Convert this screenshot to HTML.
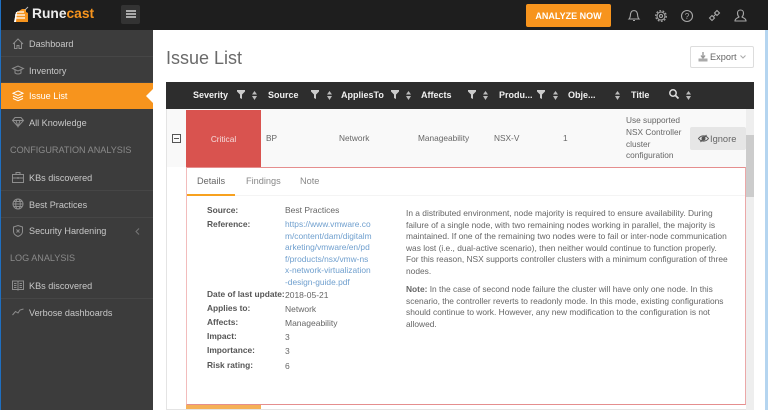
<!DOCTYPE html>
<html><head><meta charset="utf-8"><style>
*{box-sizing:border-box}
html,body{margin:0;padding:0;width:768px;height:410px;overflow:hidden;background:#fff;font-family:"Liberation Sans",sans-serif;color:#555}
body{filter:blur(.35px)}
.a{position:absolute;white-space:nowrap}
.nav{position:absolute;left:29px;font-size:9.1px;color:#c8c8c8;line-height:12px;white-space:nowrap}
.sec{position:absolute;left:10px;font-size:9.1px;color:#8a8a8a;line-height:12px;white-space:nowrap}
.sep{position:absolute;left:1px;width:152px;height:1px;background:#464646}
.th{position:absolute;top:89px;font-size:9px;font-weight:bold;color:#f0f0f0;line-height:12px;white-space:nowrap}
.td{position:absolute;font-size:8.3px;color:#666;line-height:12px;white-space:nowrap}
.l{position:absolute;left:207px;font-size:8.4px;font-weight:bold;color:#555;line-height:11px;white-space:nowrap}
.v{position:absolute;left:285px;font-size:8.5px;color:#666;line-height:11px;white-space:nowrap}
.lk{color:#6f9fce;font-size:8.4px}
.p{position:absolute;left:406px;font-size:8.4px;color:#666;line-height:11.6px;white-space:nowrap}
svg{position:absolute;overflow:visible}
.i{fill:none;stroke:#8d8d8d;stroke-width:1}
.t{fill:none;stroke:#a8a8a8;stroke-width:1.1}
</style></head><body>
<div class="a" style="left:0;top:0;width:768px;height:30px;background:#1e1e1e"></div>
<div class="a" style="left:0;top:30px;width:153px;height:380px;background:#3c3c3c"></div>
<div class="a" style="left:0;top:0;width:1px;height:410px;background:#1f6fc0"></div>
<div class="a" style="left:765px;top:30px;width:3px;height:380px;background:#b5d5f0"></div>

<svg style="left:13px;top:6px" width="16" height="17" viewBox="0 0 16 17"><path d="M1 16L3 7L9 3H13V6L15 7V16Z" fill="#f7941d"/><path d="M2 9H12M2 12H12M4 6H11" stroke="#fff" stroke-width="1.2"/><path d="M1 16L3 6L4 6L3 16Z" fill="#fff"/><path d="M12 4L15 1" stroke="#bbb"/></svg>
<div class="a" style="left:32px;top:6px;font-size:13.8px;font-weight:bold;line-height:16px;color:#eee">Rune<span style="color:#f7941d">cast</span></div>
<div class="a" style="left:121px;top:5px;width:19px;height:19px;background:#333;border-radius:2px"></div>
<div class="a" style="left:126px;top:10px;width:10px;height:2px;background:#aaa"></div>
<div class="a" style="left:126px;top:13px;width:10px;height:2px;background:#aaa"></div>
<div class="a" style="left:126px;top:16px;width:10px;height:2px;background:#aaa"></div>

<div class="a" style="left:526px;top:4px;width:85px;height:23px;background:#f7941d;border-radius:2px;color:#fff;font-size:9px;font-weight:bold;text-align:center;line-height:24px">ANALYZE NOW</div>
<svg class="t" style="left:628px;top:9px" width="12" height="13" viewBox="0 0 12 13"><path d="M1 10C3 8 2 5 3 3.500C4 1 8 1 9 3.500C10 5 9 8 11 10ZM5 11.500H7" class="t"/></svg>
<svg style="left:655px;top:10px" width="12" height="12" viewBox="0 0 12 12"><circle cx="6" cy="6" r="4" class="t"/><circle cx="6" cy="6" r="5.300" fill="none" stroke="#a8a8a8" stroke-width="1.200" stroke-dasharray="1.800 1.500"/><circle cx="6" cy="6" r="1.500" class="t"/></svg>
<svg style="left:681px;top:10px" width="13" height="13" viewBox="0 0 13 13"><circle cx="6" cy="6" r="5.500" class="t"/><text x="6" y="9" text-anchor="middle" font-family="Liberation Sans" font-size="8" fill="#a8a8a8">?</text></svg>
<svg style="left:708px;top:9px" width="13" height="13" viewBox="0 0 13 13"><path d="M1.500 9L4 6.500L6.500 9L4 11.500ZM6.500 4L9 1.500L11.500 4L9 6.500Z" class="t"/><path d="M5 8L8 5" class="t"/></svg>
<svg style="left:734px;top:9px" width="13" height="13" viewBox="0 0 13 13"><path d="M1 12C1 9 4 9 5 8C4 7 3.500 5.500 3.500 4C3.500 2 5 1 6.500 1S9.500 2 9.500 4C9.500 5.500 9 7 8 8C9 9 12 9 12 12Z" class="t"/></svg>

<div class="sep" style="top:56px"></div><div class="sep" style="top:82px"></div><div class="sep" style="top:108px;background:#3c3c3c"></div><div class="sep" style="top:190px"></div><div class="sep" style="top:217px"></div><div class="sep" style="top:298px"></div>
<div class="a" style="left:1px;top:83px;width:152px;height:26px;background:#f7941d"></div>
<div class="a" style="left:146px;top:89px;width:0;height:0;border-top:7px solid transparent;border-bottom:7px solid transparent;border-right:7px solid #fff"></div>

<svg class="i" style="left:12px;top:38px" width="12" height="11" viewBox="0 0 12 11"><path d="M1 6L6 1L11 6M2.500 5V10.500H5V7.500H7V10.500H9.500V5" class="i"/></svg>
<svg class="i" style="left:12px;top:65px" width="12" height="10" viewBox="0 0 12 10"><path d="M.5 3.500L6 1L11.500 3.500L6 6ZM3 5V8C4.500 9.300 7.500 9.300 9 8V5" class="i"/></svg>
<svg style="left:12px;top:90px" width="12" height="12" viewBox="0 0 12 12"><path d="M6 1L11 3.200L6 5.400L1 3.200ZM1 6L6 8.200L11 6M1 8.500L6 10.700L11 8.500" fill="none" stroke="#fff" stroke-width="1"/></svg>
<svg class="i" style="left:12px;top:117px" width="12" height="10" viewBox="0 0 12 10"><path d="M3 .5H9L11.500 3.500L6 9.500L.5 3.500ZM.5 3.500H11.500M4 3.500L6 9.500L8 3.500" class="i"/></svg>
<svg class="i" style="left:12px;top:172px" width="12" height="11" viewBox="0 0 12 11"><path d="M.5 2.500H11.500V10.500H.5ZM4 2.500V.5H8V2.500M.5 6H11.500M6 5V7" class="i"/></svg>
<svg style="left:12px;top:198px" width="12" height="12" viewBox="0 0 12 12"><circle cx="6" cy="6" r="5" class="i"/><ellipse cx="6" cy="6" rx="2.300" ry="5" class="i"/><path d="M1 6H11M1.700 3.500H10.300M1.700 8.500H10.300" class="i"/></svg>
<svg style="left:13px;top:225px" width="10" height="12" viewBox="0 0 10 12"><path d="M5 .5L9.500 2V6.500C9.500 9 7 10.700 5 11.500C3 10.700 .5 9 .5 6.500V2Z" class="i"/><path d="M3.500 4.500L6.500 7.500M6.500 4.500L3.500 7.500" class="i"/></svg>
<svg style="left:12px;top:280px" width="12" height="11" viewBox="0 0 12 11"><path d="M.5 1H5C5.500 1 6 1.500 6 2C6 1.500 6.500 1 7 1H11.500V9.500H7C6.500 9.500 6 10 6 10C6 10 5.500 9.500 5 9.500H.5ZM6 2V10M2 3.500H4.500M2 5.500H4.500M2 7.500H4.500M7.500 3.500H10M7.500 5.500H10M7.500 7.500H10" class="i"/></svg>
<svg style="left:12px;top:308px" width="12" height="8" viewBox="0 0 12 8"><path d="M.5 7L3.500 3.500L6 5L8 2L11.500 1" class="i"/></svg>

<div class="nav" style="top:38px">Dashboard</div>
<div class="nav" style="top:65px">Inventory</div>
<div class="nav" style="top:90px;color:#fff">Issue List</div>
<div class="nav" style="top:117px">All Knowledge</div>
<div class="sec" style="top:144px">CONFIGURATION ANALYSIS</div>
<div class="nav" style="top:172px">KBs discovered</div>
<div class="nav" style="top:199px">Best Practices</div>
<div class="nav" style="top:225px">Security Hardening</div>
<svg style="left:135px;top:228px" width="5" height="7" viewBox="0 0 5 7"><path d="M4 .5L1 3.500L4 6.500" fill="none" stroke="#777"/></svg>
<div class="sec" style="top:252px">LOG ANALYSIS</div>
<div class="nav" style="top:280px">KBs discovered</div>
<div class="nav" style="top:307px">Verbose dashboards</div>

<div class="a" style="left:166px;top:47px;font-size:18px;line-height:22px;color:#6a6a6a">Issue List</div>
<div class="a" style="left:690px;top:46px;width:64px;height:22px;border:1px solid #ddd;border-radius:2px;background:#fff"></div>
<svg style="left:698px;top:52px" width="10" height="10" viewBox="0 0 10 10"><path d="M5 0V5M3 3.500L5 6L7 3.500" fill="none" stroke="#999" stroke-width="1.400"/><path d="M.5 6.500H9.500V9.500H.5Z" fill="#aaa"/></svg>
<div class="a" style="left:710px;top:51px;font-size:9.2px;line-height:12px;color:#666">Export</div>
<svg style="left:740px;top:55px" width="6" height="4" viewBox="0 0 6 4"><path d="M.5 .5L3 3L5.500 .5" fill="none" stroke="#aaa"/></svg>

<div class="a" style="left:166px;top:82px;width:588px;height:27px;background:#2d2d2d"></div>
<div class="th" style="left:193px">Severity</div>
<div class="th" style="left:268px">Source</div>
<div class="th" style="left:341px">AppliesTo</div>
<div class="th" style="left:421px">Affects</div>
<div class="th" style="left:499px">Produ...</div>
<div class="th" style="left:568px">Obje...</div>
<div class="th" style="left:631px">Title</div>
<svg style="left:237px;top:90px" width="8" height="9"><path d="M0 0H8V1.500L5 4.500V9L3 8V4.500L0 1.500Z" fill="#ccc"/></svg>
<svg style="left:311px;top:90px" width="8" height="9"><path d="M0 0H8V1.500L5 4.500V9L3 8V4.500L0 1.500Z" fill="#ccc"/></svg>
<svg style="left:391px;top:90px" width="8" height="9"><path d="M0 0H8V1.500L5 4.500V9L3 8V4.500L0 1.500Z" fill="#ccc"/></svg>
<svg style="left:468px;top:90px" width="8" height="9"><path d="M0 0H8V1.500L5 4.500V9L3 8V4.500L0 1.500Z" fill="#ccc"/></svg>
<svg style="left:537px;top:90px" width="8" height="9"><path d="M0 0H8V1.500L5 4.500V9L3 8V4.500L0 1.500Z" fill="#ccc"/></svg>
<svg style="left:669px;top:89px" width="10" height="10"><circle cx="4" cy="4" r="3.200" fill="none" stroke="#ddd" stroke-width="1.500"/><path d="M6.500 6.500L9.500 9.500" stroke="#ddd" stroke-width="1.800"/></svg>
<svg style="left:252px;top:91px" width="5" height="9"><path d="M2.500 0L5 3.500H0ZM2.500 9L5 5H0Z" fill="#bbb"/></svg>
<svg style="left:327px;top:91px" width="5" height="9"><path d="M2.500 0L5 3.500H0ZM2.500 9L5 5H0Z" fill="#bbb"/></svg>
<svg style="left:406px;top:91px" width="5" height="9"><path d="M2.500 0L5 3.500H0ZM2.500 9L5 5H0Z" fill="#bbb"/></svg>
<svg style="left:483px;top:91px" width="5" height="9"><path d="M2.500 0L5 3.500H0ZM2.500 9L5 5H0Z" fill="#bbb"/></svg>
<svg style="left:553px;top:91px" width="5" height="9"><path d="M2.500 0L5 3.500H0ZM2.500 9L5 5H0Z" fill="#bbb"/></svg>
<svg style="left:615px;top:91px" width="5" height="9"><path d="M2.500 0L5 3.500H0ZM2.500 9L5 5H0Z" fill="#bbb"/></svg>
<svg style="left:686px;top:91px" width="5" height="9"><path d="M2.500 0L5 3.500H0ZM2.500 9L5 5H0Z" fill="#bbb"/></svg>

<div class="a" style="left:166px;top:109px;width:580px;height:58px;background:#f9f9f9"></div>
<div class="a" style="left:166px;top:109px;width:1px;height:301px;background:#e4e4e4"></div>
<div class="a" style="left:186px;top:110px;width:75px;height:57px;background:#d9534f;color:#f5dcdc;font-size:8.3px;text-align:center;line-height:58px">Critical</div>
<svg style="left:172px;top:134px" width="9" height="9"><path d="M.5 .5H8.500V8.500H.5ZM2 4.500H7" fill="none" stroke="#555"/></svg>
<div class="td" style="left:266px;top:132px">BP</div>
<div class="td" style="left:339px;top:132px">Network</div>
<div class="td" style="left:418px;top:132px">Manageability</div>
<div class="td" style="left:494px;top:132px">NSX-V</div>
<div class="td" style="left:563px;top:132px">1</div>
<div class="td" style="left:626px;top:115px;line-height:11.800px">Use supported<br>NSX Controller<br>cluster<br>configuration</div>
<div class="a" style="left:690px;top:127px;width:56px;height:23px;background:#e6e6e6;border-radius:2px"></div>
<svg style="left:698px;top:134px" width="11" height="9" viewBox="0 0 11 9"><path d="M.5 4.500C3 1 8 1 10.500 4.500C8 8 3 8 .5 4.500Z" fill="none" stroke="#555"/><circle cx="5.500" cy="4.500" r="2" fill="#555"/><path d="M2.500 8L8.500 1" stroke="#555"/></svg>
<div class="td" style="left:710px;top:133px;font-size:9.3px">Ignore</div>

<div class="a" style="left:746px;top:109px;width:8px;height:301px;background:#eee"></div>
<div class="a" style="left:746px;top:135px;width:8px;height:62px;background:#ccc"></div>

<div class="a" style="left:186px;top:167px;width:560px;height:238px;border:1px solid #e58e8e;border-left-color:#f2bcbc;border-right-color:#eba8a8;background:#fff"></div>
<div class="a" style="left:187px;top:195px;width:558px;height:1px;background:#f4f4f4"></div>
<div class="a" style="left:187px;top:194px;width:48px;height:2px;background:#f7a11f"></div>
<div class="a" style="left:197px;top:175px;font-size:9.2px;line-height:12px;color:#666">Details</div>
<div class="a" style="left:246px;top:175px;font-size:9.2px;line-height:12px;color:#888">Findings</div>
<div class="a" style="left:300px;top:175px;font-size:9.2px;line-height:12px;color:#888">Note</div>

<div class="l" style="top:205px">Source:</div><div class="v" style="top:205px">Best Practices</div>
<div class="l" style="top:219px">Reference:</div>
<div class="v lk" style="top:219px;line-height:11.600px">https://www.vmware.co<br>m/content/dam/digitalm<br>arketing/vmware/en/pd<br>f/products/nsx/vmw-ns<br>x-network-virtualization<br>-design-guide.pdf</div>
<div class="l" style="top:289px">Date of last update:</div><div class="v" style="top:290px">2018-05-21</div>
<div class="l" style="top:303px">Applies to:</div><div class="v" style="top:304px">Network</div>
<div class="l" style="top:317px">Affects:</div><div class="v" style="top:318px">Manageability</div>
<div class="l" style="top:331px">Impact:</div><div class="v" style="top:332px">3</div>
<div class="l" style="top:345px">Importance:</div><div class="v" style="top:346px">3</div>
<div class="l" style="top:360px">Risk rating:</div><div class="v" style="top:361px">6</div>

<div class="p" style="top:208px">In a distributed environment, node majority is required to ensure availability. During<br>failure of a single node, with two remaining nodes working in parallel, the majority is<br>maintained. If one of the remaining two nodes were to fail or inter-node communication<br>was lost (i.e., dual-active scenario), then neither would continue to function properly.<br>For this reason, NSX supports controller clusters with a minimum configuration of three<br>nodes.</div>
<div class="p" style="top:284px"><b>Note:</b> In the case of second node failure the cluster will have only one node. In this<br>scenario, the controller reverts to readonly mode. In this mode, existing configurations<br>should continue to work. However, any new modification to the configuration is not<br>allowed.</div>

<div class="a" style="left:186px;top:405px;width:75px;height:5px;background:#f5b057"></div>
<div class="a" style="left:166px;top:409px;width:580px;height:1px;background:#e4e4e4"></div>
</body></html>
